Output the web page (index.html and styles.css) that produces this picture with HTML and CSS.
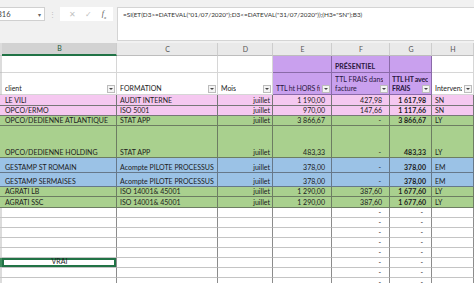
FILE: index.html
```html
<!DOCTYPE html>
<html lang="fr">
<head>
  <meta charset="UTF-8">
  <title>Formations juillet</title>
  <link rel="stylesheet" href="styles.css">
</head>
<body>

  <!-- Name box + formula bar -->
  <div class="toolbar">
    <div class="namebox"><span>B16</span><span class="caret">&#9662;</span></div>
    <div class="sep">&#8942;</div>
    <div class="fxbox">
      <span class="icon">&#10005;</span>
      <span class="icon">&#10003;</span>
      <span class="fx">f<sub>x</sub></span>
    </div>
    <div class="formula">=SI(ET(D3&gt;=DATEVAL("01/07/2020");D3&lt;=DATEVAL("31/07/2020"));(H3="SN");B3)</div>
  </div>

  <!-- Sheet grid, rows are added below -->
  <div id="sheet" class="sheet"></div>

  <script>
    const rows = [
      { color: 'pink',  b: 'LE VILI', c: 'AUDIT INTERNE', e: '1 190,00', f: '427,98', g: '1 617,98', h: 'SN' },
      { color: 'pink',  b: 'OPCO/ERMO', c: 'ISO 5001', e: '970,00', f: '147,66', g: '1 117,66', h: 'SN' },
      { color: 'green', b: 'OPCO/DEDIENNE ATLANTIQUE', c: 'STAT APP', e: '3 866,67', f: '-', g: '3 866,67', h: 'LY' },
      { color: 'green', b: 'OPCO/DEDIENNE HOLDING', c: 'STAT APP', e: '483,33', f: '-', g: '483,33', h: 'LY' },
      { color: 'blue',  b: 'GESTAMP ST ROMAIN', c: 'Acompte PILOTE PROCESSUS', e: '378,00', f: '-', g: '378,00', h: 'EM' },
      { color: 'blue',  b: 'GESTAMP SERMAISES', c: 'Acompte PILOTE PROCESSUS', e: '378,00', f: '-', g: '378,00', h: 'EM' },
      { color: 'green', b: 'AGRATI LB', c: 'ISO 14001&amp; 45001', e: '1 290,00', f: '387,60', g: '1 677,60', h: 'LY' },
      { color: 'green', b: 'AGRATI SSC', c: 'ISO 14001&amp; 45001', e: '1 290,00', f: '387,60', g: '1 677,60', h: 'LY' }
    ];

    const sheet = document.getElementById('sheet');
    const filter = '<span class="filter"></span>';

    function cell(cls, html) {
      sheet.insertAdjacentHTML('beforeend', `<div class="cell ${cls}">${html || ''}</div>`);
    }

    function num(col, value, extra) {
      const dash = value === '-' ? ' dash' : '';
      cell(`num ${col}${dash} ${extra}`, value);
    }

    // column letters
    cell('rowhead corner');
    ['B', 'C', 'D', 'E', 'F', 'G', 'H'].forEach(letter => {
      cell('colhead' + (letter === 'B' ? ' selected' : ''), letter);
    });

    // title row
    cell('rowhead');
    cell('blank'); cell('blank'); cell('blank');
    cell('purple'); cell('purple title', 'PRÉSENTIEL'); cell('purple');
    cell('blank');

    // filter headers
    cell('rowhead');
    cell('head', `<span class="label">client</span>${filter}`);
    cell('head', `<span class="label">FORMATION</span>${filter}`);
    cell('head', `<span class="label">Mois</span>${filter}`);
    cell('head purple tight', `<span class="label">TTL ht HORS frais</span>${filter}`);
    cell('head purple', `<span class="label wrap">TTL FRAIS dans<br>facture</span>${filter}`);
    cell('head purple bold', `<span class="label wrap">TTL HT avec<br>FRAIS</span>${filter}`);
    cell('head', `<span class="label">Intervenant</span>${filter}`);

    rows.forEach(r => {
      cell('rowhead ' + r.color);
      cell(r.color, r.b);
      cell(r.color, r.c);
      cell('month ' + r.color, 'juillet');
      num('col-e', r.e, r.color);
      num('col-f', r.f, r.color);
      num('col-g', r.g, r.color);
      cell(r.color, r.h);
    });

    // empty rows, the sixth holds the selected cell
    for (let i = 0; i < 8; i++) {
      const active = i === 5;
      cell('rowhead' + (active ? ' active' : ''));
      cell('empty' + (active ? ' vrai' : ''), active ? 'VRAI' : '');
      cell('empty'); cell('empty'); cell('empty');
      num('col-f', '-', 'empty');
      num('col-g', '-', 'empty');
      cell('empty');
    }
  </script>

</body>
</html>
```

FILE: styles.css
```css
* {
  box-sizing: border-box;
}

body {
  margin: 0;
  width: 474px;
  height: 283px;
  overflow: hidden;
  background: #fff;
  font-family: Lato, "Liberation Sans", sans-serif;
  font-size: 7px;
  color: #1c1c1c;
}

/* formula bar */
.toolbar {
  display: flex;
  align-items: flex-start;
  height: 43px;
  padding-top: 7px;
  background: #f1f1f1;
}

.namebox {
  display: flex;
  align-items: center;
  justify-content: space-between;
  width: 52px;
  height: 14px;
  margin-left: -7px;
  padding: 0 3px 0 3px;
  background: #fff;
  border: 1px solid #d0d0d0;
  color: #444;
  font-size: 7.5px;
}

.caret {
  font-size: 6px;
  color: #666;
}

.sep {
  width: 15px;
  line-height: 14px;
  text-align: center;
  color: #bbb;
}

.fxbox {
  display: flex;
  align-items: center;
  justify-content: space-around;
  width: 53px;
  height: 14px;
  padding: 0 2px 0 4px;
  background: #fff;
  color: #c2c2c2;
  font-size: 8px;
}

.fx {
  font-family: "Liberation Serif", serif;
  font-style: italic;
  color: #555;
  font-size: 8px;
}

.fx sub {
  font-size: 5px;
}

.formula {
  flex: 1;
  height: 34px;
  margin-left: 4px;
  padding: 3px 5px;
  background: #fff;
  border: 1px solid #d4d4d4;
  border-right: none;
  color: #333;
  font-size: 6.4px;
  white-space: nowrap;
}

/* sheet */
.sheet {
  display: grid;
  grid-template-columns: 2px 115px 101px 55px 59px 58px 42px 42px;
  grid-template-rows: 13px 17px 22px 11px 10px 10px 32px 15px 14px 10px 11px repeat(8, 10px);
}

.cell {
  display: flex;
  align-items: flex-end;
  padding: 0 2px 0 3px;
  overflow: hidden;
  white-space: nowrap;
  line-height: 9px;
  border-right: 1px solid #d6d6d6;
  border-bottom: 1px solid #d6d6d6;
}

.rowhead {
  padding: 0;
  background: #dcdcdc;
  border-right: none;
  border-bottom-color: #c6c6c6;
}

.rowhead.active {
  background: #3f8d5e;
}

.colhead {
  align-items: center;
  justify-content: center;
  background: #e9e9e9;
  color: #555;
  border-right-color: #cdcdcd;
  border-bottom-color: #bdbdbd;
}

.colhead.selected {
  background: #d2d2d2;
  color: #1f5c3a;
  border-bottom: 2px solid #217346;
}

.purple {
  background: #c9a0ee;
  color: #2a1740;
  border-color: #8a6aa8;
}

.title {
  font-weight: bold;
  padding-bottom: 1px;
}

.head {
  position: relative;
  padding-bottom: 1px;
}

.head .label {
  overflow: hidden;
  margin-right: 9px;
}

.head .wrap {
  margin-right: 0;
}

.bold {
  font-weight: bold;
}

.head.bold {
  padding-left: 2px;
  padding-right: 0;
  letter-spacing: -0.25px;
}

.head.tight {
  letter-spacing: -0.15px;
}

/* dropdown button sits over the cell's bottom-right corner */
.filter {
  position: absolute;
  right: 1px;
  bottom: 1px;
  width: 8px;
  height: 8px;
  background: #f4f4f4;
  border: 1px solid #bcbcbc;
}

.filter::after {
  content: "";
  position: absolute;
  left: 1px;
  top: 2px;
  border-left: 2px solid transparent;
  border-right: 2px solid transparent;
  border-top: 2px solid #444;
}

.pink {
  background: #f5c8f0;
  border-color: #777;
}

.green {
  background: #a9d08e;
  border-color: #6d7d62;
}

.blue {
  background: #9bc2e6;
  border-color: #66788a;
}

.empty {
  border-right-color: #8c8c8c;
  border-bottom-color: #c4c4c4;
}

.month,
.num {
  justify-content: flex-end;
}

.month {
  padding-right: 2px;
}

.col-e {
  padding-right: 6px;
}

.col-f {
  padding-right: 7px;
}

.col-g {
  padding-right: 5px;
  font-weight: bold;
}

.dash {
  padding-right: 8px;
  font-weight: normal;
}

.vrai {
  justify-content: center;
  box-shadow: inset 0 0 0 2px #217346;
  padding-bottom: 1px;
}
```
